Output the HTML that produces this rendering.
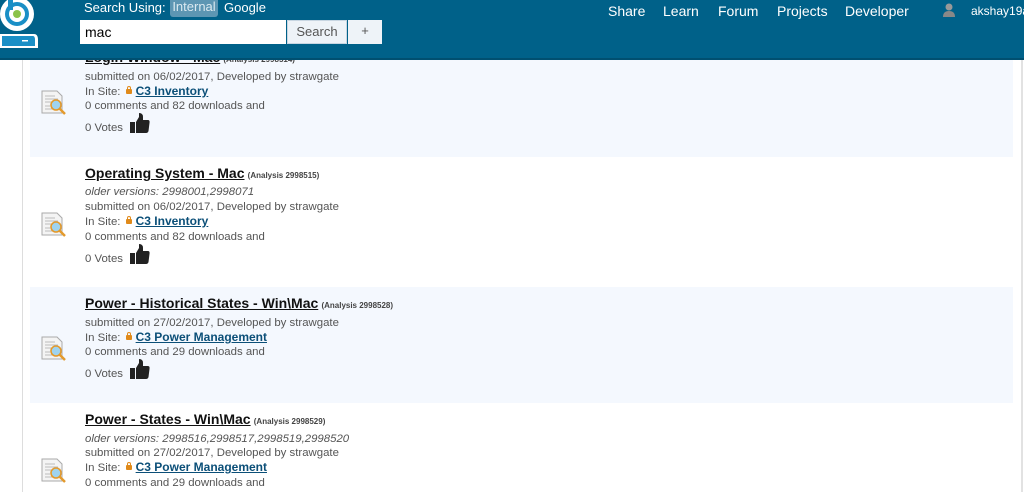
<!DOCTYPE html>
<html><head><style>
body{margin:0;width:1024px;height:492px;overflow:hidden;background:#fff;font-family:"Liberation Sans",sans-serif;position:relative}
.hdr{position:absolute;left:0;top:0;width:1024px;height:58px;background:#006189;border-bottom:2px solid #004f70;z-index:5}
.a{position:absolute}
.lb{position:absolute;left:22px;top:60px;width:1px;height:432px;background:#ddd}
.rb{position:absolute;left:1021px;top:60px;width:2px;height:432px;background:#e2e2e2}
.stripe{position:absolute;left:30px;width:983px;background:#f4f8fe}
.t{position:absolute;left:85px;font-size:11.4px;color:#555;line-height:15px;white-space:nowrap}
.ttl{font-size:14px;font-weight:bold;color:#111;text-decoration:underline}
.an{font-size:8px;font-weight:bold;color:#444}
.lnk{color:#0b4f78;font-weight:bold;text-decoration:underline;font-size:12px}
.lock{display:inline-block;width:6px;height:5px;background:#e08a1a;border-radius:1px;margin:0 4px 0 2px;position:relative;top:-1px}
.lock:before{content:"";position:absolute;left:1px;top:-3px;width:2px;height:3px;border:1px solid #e08a1a;border-bottom:none;border-radius:2px 2px 0 0}
.ico{position:absolute;left:40px;width:28px;height:28px}
</style></head><body>
<div class="hdr">
 <svg class="a" style="left:0;top:0" width="44" height="50" viewBox="0 0 44 50"><circle cx="17" cy="14" r="17" fill="#fff"/><circle cx="17" cy="14" r="12" fill="#1a8fc6"/><circle cx="17" cy="14" r="8" fill="#fff"/><circle cx="17" cy="14" r="4" fill="#8bc34a"/><rect x="8" y="0" width="5" height="10" fill="#1a8fc6"/><path d="M0 34 H34 Q38 34 38 40 V48 H0 Z" fill="#fff"/><path d="M2 36 H33 Q35 36 35 40 V46 H2 Z" fill="#1a8fc6"/><rect x="22" y="40" width="6" height="1.5" fill="#fff"/></svg>
 <div class="a" style="left:84px;top:0;font-size:13px;color:#fff">Search Using:</div>
 <div class="a" style="left:170px;top:-3px;width:48px;height:20px;background:#5d96b3;border-radius:3px;color:#dbe9f0;font-size:13px;text-align:center;line-height:20px">Internal</div>
 <div class="a" style="left:224px;top:0;font-size:13px;color:#fff">Google</div>
 <div class="a" style="left:80px;top:20px;width:206px;height:24px;background:#fff;font-size:14px;line-height:24px;padding-left:5px;box-sizing:border-box">mac</div>
 <div class="a" style="left:287px;top:20px;width:60px;height:24px;background:#eef3f8;border:1px solid #c8d6e2;box-sizing:border-box;font-size:13px;color:#555;text-align:center;line-height:22px">Search</div>
 <div class="a" style="left:348px;top:20px;width:34px;height:24px;background:#eef3f8;box-sizing:border-box;font-size:13px;color:#555;text-align:center;line-height:22px">+</div>
 <div class="a" style="left:608px;top:3px;font-size:14px;color:#fff">Share</div>
 <div class="a" style="left:663px;top:3px;font-size:14px;color:#fff">Learn</div>
 <div class="a" style="left:718px;top:3px;font-size:14px;color:#fff">Forum</div>
 <div class="a" style="left:777px;top:3px;font-size:14px;color:#fff">Projects</div>
 <div class="a" style="left:845px;top:3px;font-size:14px;color:#fff">Developer</div>
 <svg class="a" style="left:943px;top:3px" width="12" height="14"><circle cx="6" cy="4" r="3.5" fill="#999"/><path d="M0 14 Q0 8 6 8 Q12 8 12 14Z" fill="#888"/></svg>
 <div class="a" style="left:971px;top:4px;font-size:12px;color:#fff">akshay19a</div>
</div>
<div class="lb"></div><div class="rb"></div>
<div class="stripe" style="top:60px;height:97px"></div>
<div class="stripe" style="top:287px;height:116px"></div>

<svg width="0" height="0" style="position:absolute"><defs>
<symbol id="ic" viewBox="0 0 28 28"><path d="M2 3 H17 L22 8 V25 H2 Z" fill="#f4f4f4" stroke="#aaa"/><path d="M5 8h10M5 11h13M5 14h6M5 18h5M5 21h12" stroke="#bbb"/><circle cx="16" cy="17" r="5" fill="#9fd3ef" stroke="#e39a2d" stroke-width="1.6"/><path d="M19.5 20.5 L25 26" stroke="#e39a2d" stroke-width="2.5"/></symbol>
<symbol id="th" viewBox="0 0 20 20"><path d="M0 9h5v11H0zM6 9 L9 4 V0 Q13 0 13 4 V7 H18 Q20 7 19.5 10 L18.5 18 Q18 20 16 20 H6Z" fill="#222"/></symbol>
</defs></svg>

<div class="t" style="top:50px"><span class="ttl">Login Window - Mac</span> <span class="an">(Analysis 2998514)</span></div>
<div class="t" style="top:70px">submitted on 06/02/2017, Developed by strawgate</div>
<div class="t" style="top:84px">In Site: <span class="lock"></span><span class="lnk">C3 Inventory</span></div>
<div class="t" style="top:99px">0 comments and 82 downloads and</div>
<div class="t" style="top:113px">0 Votes <svg width="20" height="20" style="vertical-align:-2px;margin-left:4px"><use href="#th"/></svg></div>
<svg class="ico" style="top:88px"><use href="#ic"/></svg>

<div class="t" style="top:166px"><span class="ttl">Operating System - Mac</span> <span class="an">(Analysis 2998515)</span></div>
<div class="t" style="top:185px;font-style:italic">older versions: 2998001,2998071</div>
<div class="t" style="top:200px">submitted on 06/02/2017, Developed by strawgate</div>
<div class="t" style="top:214px">In Site: <span class="lock"></span><span class="lnk">C3 Inventory</span></div>
<div class="t" style="top:230px">0 comments and 82 downloads and</div>
<div class="t" style="top:244px">0 Votes <svg width="20" height="20" style="vertical-align:-2px;margin-left:4px"><use href="#th"/></svg></div>
<svg class="ico" style="top:210px"><use href="#ic"/></svg>

<div class="t" style="top:296px"><span class="ttl">Power - Historical States - Win\Mac</span> <span class="an">(Analysis 2998528)</span></div>
<div class="t" style="top:316px">submitted on 27/02/2017, Developed by strawgate</div>
<div class="t" style="top:330px">In Site: <span class="lock"></span><span class="lnk">C3 Power Management</span></div>
<div class="t" style="top:345px">0 comments and 29 downloads and</div>
<div class="t" style="top:359px">0 Votes <svg width="20" height="20" style="vertical-align:-2px;margin-left:4px"><use href="#th"/></svg></div>
<svg class="ico" style="top:334px"><use href="#ic"/></svg>

<div class="t" style="top:412px"><span class="ttl">Power - States - Win\Mac</span> <span class="an">(Analysis 2998529)</span></div>
<div class="t" style="top:432px;font-style:italic">older versions: 2998516,2998517,2998519,2998520</div>
<div class="t" style="top:446px">submitted on 27/02/2017, Developed by strawgate</div>
<div class="t" style="top:460px">In Site: <span class="lock"></span><span class="lnk">C3 Power Management</span></div>
<div class="t" style="top:476px">0 comments and 29 downloads and</div>
<svg class="ico" style="top:456px"><use href="#ic"/></svg>
</body></html>
